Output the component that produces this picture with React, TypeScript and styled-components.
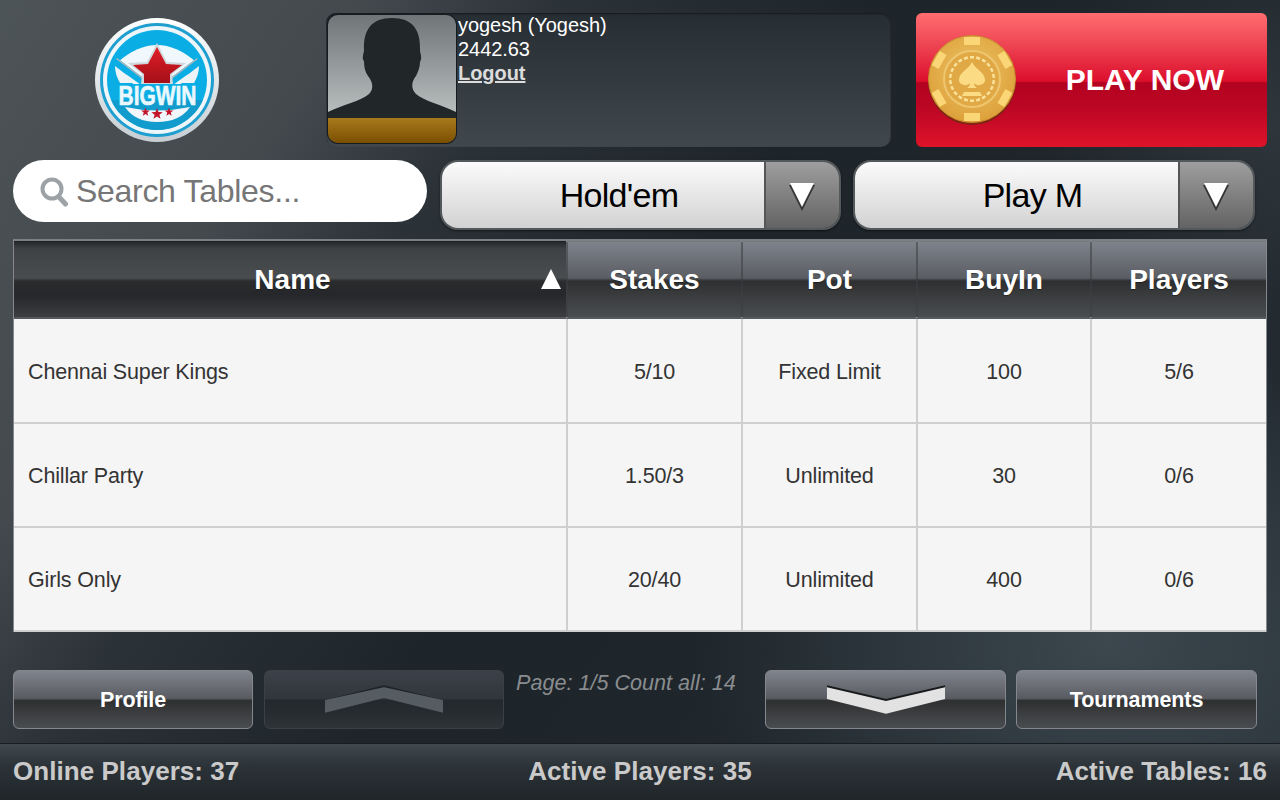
import React from "react";
import styled, { createGlobalStyle } from "styled-components";

const Global = createGlobalStyle`
  html, body { margin: 0; padding: 0; width: 1280px; height: 800px; overflow: hidden; background: #20272d; }
  * { box-sizing: border-box; }
`;

const Page = styled.div`
  width: 1280px;
  height: 800px;
  display: flex;
  flex-direction: column;
  font-family: "Liberation Sans", Arial, sans-serif;
  background:
    radial-gradient(ellipse 420px 300px at 1110px 640px, rgba(68, 80, 88, 0.75), rgba(68, 80, 88, 0) 100%),
    radial-gradient(ellipse 240px 200px at 1280px 120px, rgba(60, 68, 74, 0.5), rgba(60, 68, 74, 0) 100%),
    linear-gradient(125deg, #4d5458 0%, #43494d 20%, #2a3137 31%, #1d242a 48%, #1e252b 62%, #262e35 100%);
`;

const TopRow = styled.header`
  display: flex;
  align-items: flex-start;
  height: 147px;
  padding-top: 13px;
  padding-left: 13px;
`;

const LogoSlot = styled.div`
  width: 313px;
  height: 134px;
  display: flex;
  justify-content: center;
  padding-top: 5px;
  padding-right: 25px;
  svg { display: block; }
`;

const UserPanel = styled.section`
  width: 565px;
  height: 134px;
  display: flex;
  padding: 2px;
  border-radius: 10px;
  background: linear-gradient(#262d33, #41484c);
  box-shadow: inset 0 1px 2px #14191d;
`;

const Avatar = styled.div`
  width: 128px;
  height: 128px;
  border-radius: 10px;
  overflow: hidden;
  flex: none;
  display: flex;
  flex-direction: column;
  box-shadow: 0 0 0 1px #161b1f;
`;

const AvatarPhoto = styled.div`
  height: 103px;
  background: linear-gradient(#6f7678, #bcc1c1);
  svg { display: block; }
`;

const AvatarBar = styled.div`
  height: 25px;
  background: linear-gradient(#a87a1e, #7b4f00);
`;

const UserInfo = styled.div`
  padding-left: 2px;
  margin-top: -2px;
  color: #fff;
  font-size: 20px;
  line-height: 24px;
  letter-spacing: -0.05px;
`;

const InfoLine = styled.div``;

const LogoutLink = styled.a`
  color: #dcdcdc;
  font-weight: 700;
  text-decoration: underline;
`;

const PlayButton = styled.button`
  width: 351px;
  height: 134px;
  margin-left: 25px;
  padding: 0 43px 0 11px;
  border: 0;
  border-radius: 6px;
  display: flex;
  align-items: center;
  justify-content: space-between;
  color: #fff;
  font: 700 30px "Liberation Sans", Arial, sans-serif;
  background: linear-gradient(#ff6c70 0%, #f14c58 20%, #dc0e2c 51%, #b30320 52%, #bb0624 70%, #de1329 100%);
  svg { display: block; }
`;

const FilterRow = styled.div`
  display: flex;
  align-items: flex-start;
  height: 79px;
  margin-top: 13px;
  padding-left: 13px;
`;

const SearchBox = styled.div`
  width: 414px;
  height: 62px;
  border-radius: 31px;
  background: #fff;
  display: flex;
  align-items: center;
  padding-left: 27px;
  gap: 8px;
  color: #767676;
  font-size: 32px;
  letter-spacing: -0.3px;
  svg { display: block; flex: none; margin-top: 1px; }
`;

const Select = styled.div<{ $w: number; $gap: number }>`
  width: ${(p) => p.$w}px;
  height: 70px;
  margin-left: ${(p) => p.$gap}px;
  border: 2px solid #53585b;
  border-radius: 18px;
  overflow: hidden;
  display: flex;
  box-shadow: 0 1px 2px rgba(0, 0, 0, 0.5);
`;

const SelectValue = styled.div`
  flex: 1;
  display: flex;
  align-items: center;
  justify-content: center;
  padding-left: 32px;
  color: #000;
  font-size: 34px;
  letter-spacing: -0.7px;
  background: linear-gradient(#fbfbfb, #d2d2d2);
`;

const SelectArrow = styled.div`
  width: 75px;
  flex: none;
  display: flex;
  align-items: center;
  justify-content: center;
  padding: 3px 2px 0 0;
  border-left: 2px solid #555;
  background: linear-gradient(#9e9e9e, #636363);
  svg { display: block; }
`;

const Table = styled.div`
  margin: 0 13px;
  width: 1254px;
  height: 393px;
  border-left: 1px solid #85898d;
  border-right: 1px solid #85898d;
  border-top: 2px solid #7c8085;
  background: #f5f5f5;
`;

const HeadRow = styled.div`
  display: grid;
  grid-template-columns: 552px 175px 175px 174px 176px;
  height: 78px;
`;

const HeadCell = styled.div<{ $active?: boolean }>`
  position: relative;
  display: flex;
  align-items: center;
  justify-content: center;
  color: #fff;
  font-size: 28px;
  font-weight: 700;
  padding-left: ${(p) => (p.$active ? "5px" : "0")};
  text-shadow: 0 1px 1px rgba(0, 0, 0, 0.4);
  border-left: ${(p) => (p.$active ? "0" : "2px solid rgba(60, 62, 66, 0.55)")};
  border-bottom: 2px solid #55595d;
  border-top: 1px solid ${(p) => (p.$active ? "#1f2225" : "#74787f")};
  background: ${(p) =>
    p.$active
      ? "linear-gradient(#26292b 0%, #3f4244 9%, #4a4d4f 48%, #2a2c2e 52%, #25272a 70%, #3b3d40 100%)"
      : "linear-gradient(#7e828b 0%, #5a5d62 48%, #2e2f31 52%, #3a3c3e 72%, #4a4d50 100%)"};
`;

const SortMark = styled.span`
  position: absolute;
  right: 5px;
  top: 27px;
  width: 0;
  height: 0;
  border-left: 10px solid transparent;
  border-right: 10px solid transparent;
  border-bottom: 20px solid #fff;
`;

const BodyRow = styled.div<{ $h: number }>`
  display: grid;
  grid-template-columns: 552px 175px 175px 174px 176px;
  height: ${(p) => p.$h}px;
  border-bottom: 2px solid #cfcfcf;
`;

const BodyCell = styled.div<{ $first?: boolean; $top: number }>`
  display: flex;
  align-items: center;
  justify-content: ${(p) => (p.$first ? "flex-start" : "center")};
  padding-left: ${(p) => (p.$first ? "14px" : "0")};
  padding-top: ${(p) => p.$top}px;
  border-left: ${(p) => (p.$first ? "0" : "2px solid #cfcfcf")};
  color: #333;
  font-size: 21.5px;
  letter-spacing: -0.15px;
`;

const Pager = styled.div`
  display: flex;
  align-items: flex-start;
  height: 73px;
  margin-top: 38px;
  padding-left: 13px;
`;

const PagerButton = styled.button<{ $w: number; $gap: number; $dim?: boolean }>`
  width: ${(p) => p.$w}px;
  height: 59px;
  margin-left: ${(p) => p.$gap}px;
  padding: 2px 0 0;
  border-radius: 6px;
  border: 1px solid ${(p) => (p.$dim ? "#3a4046" : "#84888e")};
  display: flex;
  align-items: center;
  justify-content: center;
  color: #fff;
  font: 700 21.5px "Liberation Sans", Arial, sans-serif;
  letter-spacing: -0.1px;
  background: ${(p) =>
    p.$dim
      ? "linear-gradient(#3b4148 0%, #30363c 48%, #22282c 52%, #262b30 72%, #2e3338 100%)"
      : "linear-gradient(#80848d 0%, #585b60 48%, #2e2f31 52%, #3a3c3e 72%, #4a4d50 100%)"};
  svg { display: block; margin-top: -2px; }
`;

const PageInfo = styled.div`
  width: 249px;
  margin-left: 12px;
  margin-top: 1px;
  color: #8a8d8f;
  font-size: 21.6px;
  font-style: italic;
  line-height: 24px;
`;

const StatusBar = styled.footer`
  height: 57px;
  display: grid;
  grid-template-columns: 1fr auto 1fr;
  align-items: center;
  padding: 0 13px 2px;
  border-top: 1px solid #181d21;
  color: #cacaca;
  font-size: 26px;
  font-weight: 700;
  letter-spacing: 0.05px;
  background: linear-gradient(#42494d, #2c3338 40%, #1f2529);
`;

const StatusLeft = styled.span``;
const StatusMid = styled.span``;
const StatusRight = styled.span`
  text-align: right;
`;

const starPath = (cx: number, cy: number, r: number) => {
  const pts: string[] = [];
  for (let i = 0; i < 10; i++) {
    const a = -Math.PI / 2 + (i * Math.PI) / 5;
    const rr = i % 2 ? r * 0.42 : r;
    pts.push(`${(cx + rr * Math.cos(a)).toFixed(2)} ${(cy + rr * Math.sin(a)).toFixed(2)}`);
  }
  return `M${pts.join("L")}Z`;
};

const Logo = () => (
  <svg width="124" height="124" viewBox="0 0 124 124">
    <defs>
      <linearGradient id="rim" x1="0" y1="0" x2="0" y2="1">
        <stop offset="0" stopColor="#ffffff" />
        <stop offset="1" stopColor="#c6ced3" />
      </linearGradient>
      <linearGradient id="red" x1="0" y1="0" x2="0" y2="1">
        <stop offset="0" stopColor="#e01d26" />
        <stop offset="1" stopColor="#a4101a" />
      </linearGradient>
      <clipPath id="disc"><circle cx="62" cy="62" r="50" /></clipPath>
    </defs>
    <circle cx="62" cy="62" r="62" fill="url(#rim)" />
    <circle cx="62" cy="62" r="57" fill="#1f9fd0" />
    <circle cx="62" cy="62" r="54" fill="#eef6fa" />
    <circle cx="62" cy="62" r="50" fill="#0aaee4" />
    <g clipPath="url(#disc)">
      <path d="M10 82h104v32H10z" fill="#119ccd" />
    </g>
    <path d="M23 44 Q62 10 101 44 L86 66 L38 66Z" fill="#f1f8fc" />
    <path d="M30 89 Q62 96 95 89 Q85 104 62 104 Q40 104 30 89Z" fill="#f0f6f9" />
    <path d="M22 40 L51 62 L46 67 L17 46Z" fill="#0aaee4" />
    <path d="M102 40 L73 62 L78 67 L107 46Z" fill="#0aaee4" />
    <path d="M22 40 L51 62 L50 63 L21 41Z" fill="#aab6bc" />
    <path d="M102 40 L73 62 L74 63 L103 41Z" fill="#aab6bc" />
    <path d="M20 48 L42 65 L25 65 C22 60 20 54 20 48Z" fill="#eef3f6" />
    <path d="M104 48 L82 65 L99 65 C102 60 104 54 104 48Z" fill="#eef3f6" />
    <path d="M62 25 L72 44 L91 45 L77 56 L78 66 L46 66 L47 56 L33 45 L52 44Z" fill="#cfd8dc" />
    <path d="M62 29 L71 46 L87 47 L75 56 L75 65 L49 65 L49 56 L38 47 L53 46Z" fill="url(#red)" />
    <text x="62.500" y="87" textAnchor="middle" fill="#eaf8fd" stroke="#eaf8fd" strokeWidth="0.6" fontFamily="'Liberation Sans', Arial, sans-serif" fontWeight="700" fontSize="27" textLength="78" lengthAdjust="spacingAndGlyphs">BIGWIN</text>
    <path d={starPath(50.5, 94, 4.5)} fill="#c2142a" />
    <path d={starPath(62, 96, 6)} fill="#c2142a" />
    <path d={starPath(74, 94, 4.5)} fill="#c2142a" />
  </svg>
);

const Silhouette = () => (
  <svg width="128" height="103" viewBox="0 0 128 103">
    <path
      d="M0 97 C14 90 33 86 41 79 C46 74 45 67 40 61 C37 57 36 52 36 46 C34 44 35 40 36 36 C35 14 44 3 64 3 C84 3 93 14 92 36 C93 40 94 44 92 47 C92 52 90 57 88 61 C83 67 83 74 88 79 C96 86 114 90 128 97 L128 103 L0 103Z"
      fill="#212629"
    />
  </svg>
);

const Chip = () => {
  const dots = Array.from({ length: 22 }, (_, i) => (i * 360) / 22);
  const tabs = [0, 60, 120, 180, 240, 300];
  return (
    <svg width="90" height="92" viewBox="0 0 90 92">
      <defs>
        <radialGradient id="gold" cx="0.5" cy="0.42" r="0.6">
          <stop offset="0" stopColor="#edc468" />
          <stop offset="1" stopColor="#dc9f38" />
        </radialGradient>
      </defs>
      <circle cx="45" cy="47" r="44" fill="#6e2a10" opacity="0.8" />
      <circle cx="45" cy="45" r="43.500" fill="url(#gold)" stroke="#c9882c" strokeWidth="1" />
      {tabs.map((a) => (
        <rect key={a} x="37" y="3" width="16" height="8" fill="#fbd676" transform={`rotate(${a} 45 45)`} />
      ))}
      <circle cx="45" cy="45" r="28" fill="#e0a946" stroke="#efc66e" strokeWidth="2" />
      {dots.map((a) => (
        <rect key={a} x="43" y="22" width="4" height="2.500" fill="#fbe29a" transform={`rotate(${a} 45 45)`} />
      ))}
      <path d="M45 28 C48 35 58 38 58 46 C58 51 50 53 47 49 C47 51 48 53 50 54 L40 54 C42 53 43 51 43 49 C40 53 32 51 32 46 C32 38 42 35 45 28Z" fill="#fbdc85" />
      <path d="M35 62 L55 62 L53 58 L37 58Z" fill="#fbdc85" />
    </svg>
  );
};

const SearchGlyph = () => (
  <svg width="28" height="30" viewBox="0 0 28 30">
    <circle cx="12" cy="12" r="9.500" fill="none" stroke="#9ca2a6" strokeWidth="4" />
    <path d="M19 20 L25.500 27" stroke="#9ca2a6" strokeWidth="5" strokeLinecap="round" />
  </svg>
);

const DownTriangle = () => (
  <svg width="28" height="30" viewBox="0 0 28 30">
    <path d="M1 3 L27 3 L14 29Z" fill="#333" />
    <path d="M2 1 L26 1 L14 25Z" fill="#fff" />
  </svg>
);

const ChevronUp = () => (
  <svg width="120" height="30" viewBox="0 0 122 30">
    <path d="M1 15 L61 0 L121 15 L121 17 L61 2 L1 17Z" fill="#1e2327" />
    <path d="M1 15 L61 2 L121 15 L121 28 L61 13 L1 28Z" fill="#555c62" />
  </svg>
);

const ChevronDown = () => (
  <svg width="120" height="30" viewBox="0 0 122 30">
    <path d="M1 1 L61 15 L121 1 L121 14 L61 29 L1 14Z" fill="#e2e2e2" />
    <path d="M1 0 L61 14 L121 0 L121 2 L61 16 L1 2Z" fill="#181a1c" />
  </svg>
);

const rows = [
  ["Chennai Super Kings", "5/10", "Fixed Limit", "100", "5/6"],
  ["Chillar Party", "1.50/3", "Unlimited", "30", "0/6"],
  ["Girls Only", "20/40", "Unlimited", "400", "0/6"],
];

export default function App() {
  return (
    <Page>
      <Global />
      <TopRow>
        <LogoSlot><Logo /></LogoSlot>
        <UserPanel>
          <Avatar>
            <AvatarPhoto><Silhouette /></AvatarPhoto>
            <AvatarBar />
          </Avatar>
          <UserInfo>
            <InfoLine>yogesh (Yogesh)</InfoLine>
            <InfoLine>2442.63</InfoLine>
            <InfoLine><LogoutLink>Logout</LogoutLink></InfoLine>
          </UserInfo>
        </UserPanel>
        <PlayButton><Chip />PLAY NOW</PlayButton>
      </TopRow>
      <FilterRow>
        <SearchBox><SearchGlyph />Search Tables...</SearchBox>
        <Select $w={401} $gap={13}>
          <SelectValue>Hold'em</SelectValue>
          <SelectArrow><DownTriangle /></SelectArrow>
        </Select>
        <Select $w={402} $gap={12}>
          <SelectValue>Play M</SelectValue>
          <SelectArrow><DownTriangle /></SelectArrow>
        </Select>
      </FilterRow>
      <Table>
        <HeadRow>
          <HeadCell $active>Name<SortMark /></HeadCell>
          <HeadCell>Stakes</HeadCell>
          <HeadCell>Pot</HeadCell>
          <HeadCell>BuyIn</HeadCell>
          <HeadCell>Players</HeadCell>
        </HeadRow>
        {rows.map((r, n) => (
          <BodyRow key={r[0]} $h={n === 0 ? 105 : 104}>
            {r.map((c, i) => (
              <BodyCell key={i} $first={i === 0} $top={n === 0 ? 4 : 2}>{c}</BodyCell>
            ))}
          </BodyRow>
        ))}
      </Table>
      <Pager>
        <PagerButton $w={240} $gap={0}>Profile</PagerButton>
        <PagerButton $w={240} $gap={11} $dim><ChevronUp /></PagerButton>
        <PageInfo>Page: 1/5 Count all: 14</PageInfo>
        <PagerButton $w={241} $gap={0}><ChevronDown /></PagerButton>
        <PagerButton $w={241} $gap={10}>Tournaments</PagerButton>
      </Pager>
      <StatusBar>
        <StatusLeft>Online Players: 37</StatusLeft>
        <StatusMid>Active Players: 35</StatusMid>
        <StatusRight>Active Tables: 16</StatusRight>
      </StatusBar>
    </Page>
  );
}
